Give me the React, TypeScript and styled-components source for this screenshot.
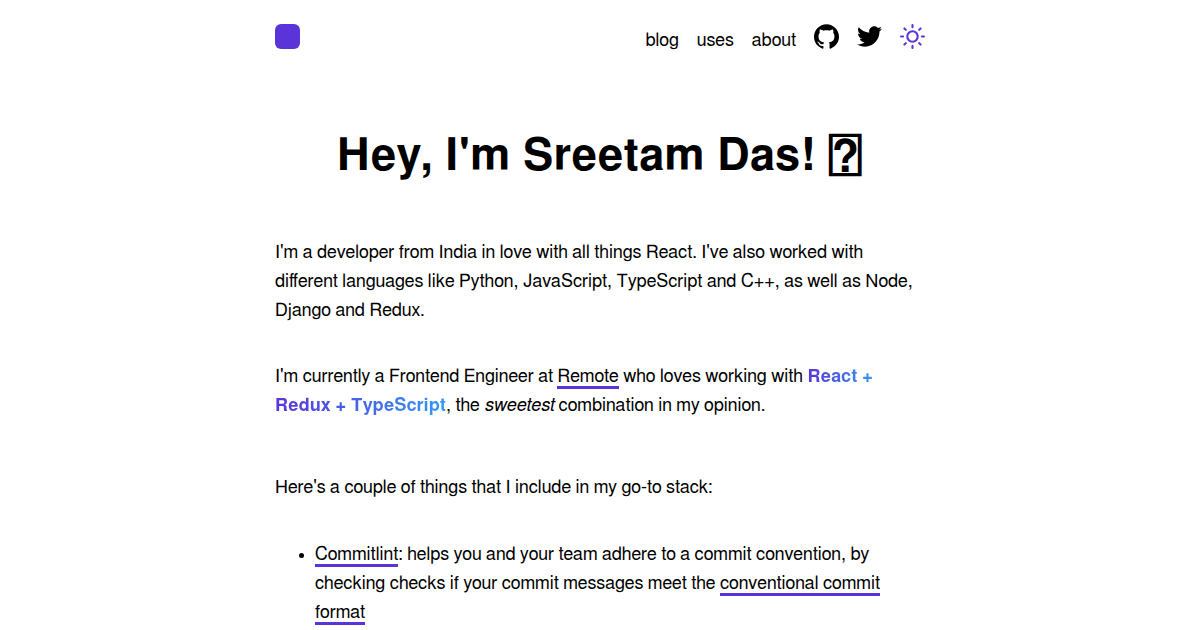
import React from "react";
import styled, { createGlobalStyle } from "styled-components";
import { FiSun } from "react-icons/fi";
import { SiGithub } from "react-icons/si";

const accent = "#5a34d9";

const GlobalStyle = createGlobalStyle`
  *, *::before, *::after { box-sizing: border-box; }
  body {
    margin: 0;
    background: #fff;
    color: #000;
    font-family: FreeSans, "Liberation Sans", Arial, sans-serif;
    font-size: 18px;
    font-kerning: none;
    line-height: 29px;
  }
`;

const Page = styled.div`
  max-width: 682px;
  margin: 0 auto;
  padding: 24px 16px;
`;

const Header = styled.header`
  display: flex;
  justify-content: space-between;
  align-items: flex-start;
`;

const Logo = styled.a`
  width: 25px;
  height: 25px;
  border-radius: 6px;
  background: ${accent};
`;

const Nav = styled.nav`
  display: flex;
  align-items: flex-start;
  gap: 18px;
`;

const NavLink = styled.a`
  padding-top: 3px;
  color: inherit;
  text-decoration: none;
`;

const IconLink = styled.a`
  display: flex;
  color: inherit;
  svg { width: 25px; height: 25px; }
`;

const ThemeButton = styled.button`
  display: flex;
  padding: 0;
  border: 0;
  background: none;
  color: ${accent};
  cursor: pointer;
  svg { width: 25px; height: 25px; }
`;

const Title = styled.h1`
  margin: 72px 0 53px;
  text-align: center;
  font-size: 45px;
  line-height: 58px;
`;

const Paragraph = styled.p<{ $after?: number }>`
  margin: 0 0 ${(p) => p.$after ?? 37}px;
`;

const TextLink = styled.a`
  color: inherit;
  text-decoration: none;
  border-bottom: 3px solid ${accent};
`;

const Highlight = styled.strong`
  background: linear-gradient(to right, ${accent}, #3498f5);
  background-clip: text;
  -webkit-background-clip: text;
  color: transparent;
  box-decoration-break: clone;
  -webkit-box-decoration-break: clone;
`;

const List = styled.ul`
  margin: 0;
  padding-left: 40px;
`;

const TwitterIcon = () => (
  <svg viewBox="0 0 24 24" fill="currentColor" aria-hidden="true">
    <path d="M23.954 4.569c-.885.389-1.83.654-2.825.775 1.014-.611 1.794-1.574 2.163-2.723-.951.555-2.005.959-3.127 1.184-.896-.959-2.173-1.559-3.591-1.559-2.717 0-4.92 2.203-4.92 4.917 0 .39.045.765.127 1.124C7.691 8.094 4.066 6.13 1.64 3.161c-.427.722-.666 1.561-.666 2.475 0 1.71.87 3.213 2.188 4.096-.807-.026-1.566-.248-2.228-.616v.061c0 2.385 1.693 4.374 3.946 4.827-.413.111-.849.171-1.296.171-.314 0-.615-.03-.916-.086.631 1.953 2.445 3.377 4.604 3.417-1.68 1.319-3.809 2.105-6.102 2.105-.39 0-.779-.023-1.17-.067 2.189 1.394 4.768 2.209 7.557 2.209 9.054 0 13.999-7.496 13.999-13.986 0-.209 0-.42-.015-.63.961-.689 1.8-1.56 2.46-2.548l-.047-.02z" />
  </svg>
);

export default function App() {
  return (
    <>
      <GlobalStyle />
      <Page>
        <Header>
          <Logo href="#" aria-label="Home" />
          <Nav>
            <NavLink href="#blog">blog</NavLink>
            <NavLink href="#uses">uses</NavLink>
            <NavLink href="#about">about</NavLink>
            <IconLink href="#github" aria-label="GitHub"><SiGithub /></IconLink>
            <IconLink href="#twitter" aria-label="Twitter"><TwitterIcon /></IconLink>
            <ThemeButton type="button" aria-label="Toggle theme"><FiSun /></ThemeButton>
          </Nav>
        </Header>
        <main>
          <Title>Hey, I'm Sreetam Das! &#x10FFFD;</Title>
          <Paragraph>
            I'm a developer from India in love with all things React. I've also worked with
            different languages like Python, JavaScript, TypeScript and C++, as well as Node,
            Django and Redux.
          </Paragraph>
          <Paragraph $after={53}>
            I'm currently a Frontend Engineer at <TextLink href="#remote">Remote</TextLink> who
            loves working with <Highlight>React + Redux + TypeScript</Highlight>, the{" "}
            <em>sweetest</em> combination in my opinion.
          </Paragraph>
          <Paragraph $after={38}>Here's a couple of things that I include in my go-to stack:</Paragraph>
          <List>
            <li>
              <TextLink href="#commitlint">Commitlint</TextLink>: helps you and your team adhere
              to a commit convention, by checking checks if your commit messages meet the{" "}
              <TextLink href="#conventional">conventional commit format</TextLink>
            </li>
          </List>
        </main>
      </Page>
    </>
  );
}
